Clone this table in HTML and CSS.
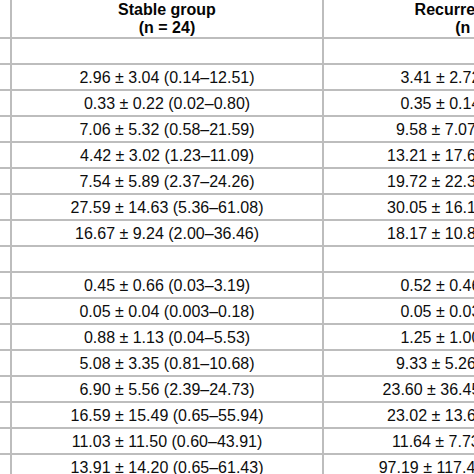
FILE: index.html
```html
<!DOCTYPE html>
<html>
<head>
<meta charset="utf-8">
<link rel="stylesheet" href="styles.css">
</head>
<body>
<table class="data">
  <thead>
    <tr>
      <th class="lbl"></th>
      <th class="grp">Stable group<br>(n = 24)</th>
      <th class="grp">Recurrence group<br>(n = 16)</th>
    </tr>
  </thead>
  <tbody>
    <tr class="sec"><td class="lbl"></td><td></td><td></td></tr>
    <tr><td class="lbl"></td><td>2.96 ± 3.04 (0.14–12.51)</td><td>3.41 ± 2.72 (0.46–9.87)</td></tr>
    <tr><td class="lbl"></td><td>0.33 ± 0.22 (0.02–0.80)</td><td>0.35 ± 0.14 (0.08–0.69)</td></tr>
    <tr><td class="lbl"></td><td>7.06 ± 5.32 (0.58–21.59)</td><td>9.58 ± 7.07 (1.26–29.43)</td></tr>
    <tr><td class="lbl"></td><td>4.42 ± 3.02 (1.23–11.09)</td><td>13.21 ± 17.66 (1.80–70.41)</td></tr>
    <tr><td class="lbl"></td><td>7.54 ± 5.89 (2.37–24.26)</td><td>19.72 ± 22.35 (2.64–90.12)</td></tr>
    <tr><td class="lbl"></td><td>27.59 ± 14.63 (5.36–61.08)</td><td>30.05 ± 16.18 (6.32–68.75)</td></tr>
    <tr><td class="lbl"></td><td>16.67 ± 9.24 (2.00–36.46)</td><td>18.17 ± 10.84 (2.31–41.62)</td></tr>
    <tr class="sec"><td class="lbl"></td><td></td><td></td></tr>
    <tr><td class="lbl"></td><td>0.45 ± 0.66 (0.03–3.19)</td><td>0.52 ± 0.46 (0.04–1.82)</td></tr>
    <tr><td class="lbl"></td><td>0.05 ± 0.04 (0.003–0.18)</td><td>0.05 ± 0.03 (0.01–0.12)</td></tr>
    <tr><td class="lbl"></td><td>0.88 ± 1.13 (0.04–5.53)</td><td>1.25 ± 1.00 (0.08–3.97)</td></tr>
    <tr><td class="lbl"></td><td>5.08 ± 3.35 (0.81–10.68)</td><td>9.33 ± 5.26 (1.64–21.38)</td></tr>
    <tr><td class="lbl"></td><td>6.90 ± 5.56 (2.39–24.73)</td><td>23.60 ± 36.45 (2.19–163.24)</td></tr>
    <tr><td class="lbl"></td><td>16.59 ± 15.49 (0.65–55.94)</td><td>23.02 ± 13.62 (3.15–54.80)</td></tr>
    <tr><td class="lbl"></td><td>11.03 ± 11.50 (0.60–43.91)</td><td>11.64 ± 7.73 (0.92–31.25)</td></tr>
    <tr><td class="lbl"></td><td>13.91 ± 14.20 (0.65–61.43)</td><td>97.19 ± 117.42 (3.02–472.16)</td></tr>
  </tbody>
</table>
</body>
</html>
```
FILE: styles.css
```css
html, body {
  margin: 0;
  padding: 0;
  background: #ffffff;
  overflow: hidden;
  width: 474px;
  height: 474px;
}

.data {
  border-collapse: separate;
  border-spacing: 0;
  font-family: "Liberation Sans", Arial, sans-serif;
  font-size: 16px;
  color: #0d0d0d;
  table-layout: fixed;
  width: 645px;
}

.data th,
.data td {
  padding: 0;
  border-right: 2px solid #bdbdbd;
  border-bottom: 2px solid #bdbdbd;
  text-align: center;
  white-space: nowrap;
  overflow: hidden;
}

.data th {
  height: 35px;
  padding-top: 1px;
  line-height: 18px;
  font-weight: bold;
  color: #050505;
  vertical-align: top;
}

.data td {
  height: 22px;
  padding-top: 2px;
  line-height: 22px;
  vertical-align: top;
}

.data .lbl {
  width: 10px;
}

.data .grp {
  width: 309px;
}

.data thead th:nth-child(3),
.data td:nth-child(3) {
  width: 318px;
}
```
